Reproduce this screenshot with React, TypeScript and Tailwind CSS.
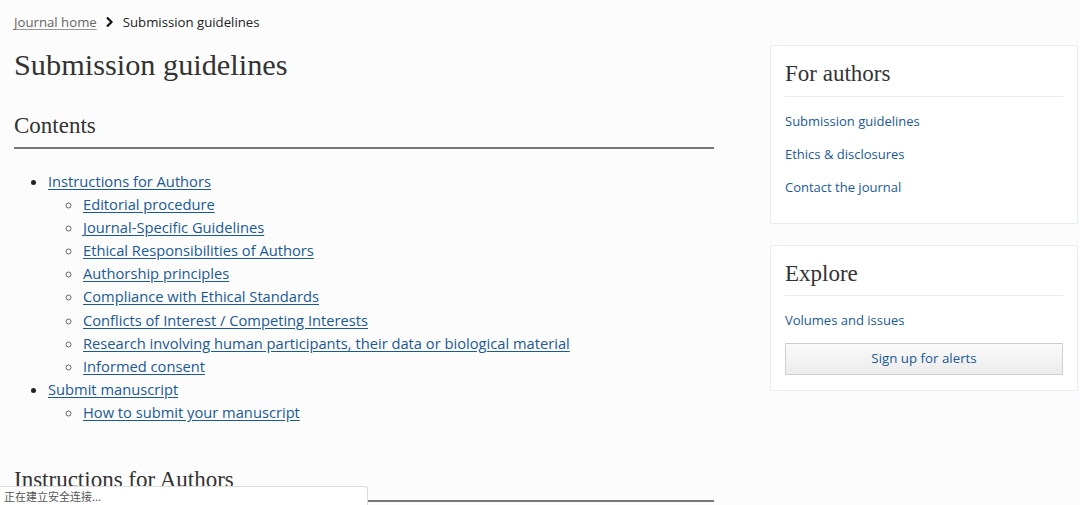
import React from "react";

const sans = "font-['Open_Sans','Noto_Sans',sans-serif]";
const serif = "font-['Liberation_Serif',serif]";

type Item = { label: string; children?: string[] };

const contents: Item[] = [
  {
    label: "Instructions for Authors",
    children: [
      "Editorial procedure",
      "Journal-Specific Guidelines",
      "Ethical Responsibilities of Authors",
      "Authorship principles",
      "Compliance with Ethical Standards",
      "Conflicts of Interest / Competing Interests",
      "Research involving human participants, their data or biological material",
      "Informed consent",
    ],
  },
  { label: "Submit manuscript", children: ["How to submit your manuscript"] },
];

function Chevron() {
  return (
    <svg width="9" height="12" viewBox="0 0 9 12" className="ml-[8px] mr-[9px]">
      <path d="M2 1.5 L6.5 6 L2 10.5" fill="none" stroke="#111" strokeWidth="2.2" />
    </svg>
  );
}

function SideLink({ children }: { children: React.ReactNode }) {
  return <a className="block text-[13px] leading-[20px] text-[#1a5a96] no-underline">{children}</a>;
}

export default function App() {
  return (
    <div className={`relative min-h-[505px] w-[1080px] overflow-hidden bg-[#fcfcfc] ${sans} text-[#222]`}>
      <div className="flex pl-[14px]">
        {/* main column */}
        <main className="w-[700px] shrink-0">
          <nav className="flex items-center pt-[13px] text-[13.2px] leading-[18px]">
            <a className="text-[#666] underline decoration-[#999] underline-offset-2">Journal home</a>
            <Chevron />
            <span className="text-[#222]">Submission guidelines</span>
          </nav>

          <h1 className={`${serif} mt-[16px] text-[30.3px] leading-[36px] font-normal text-[#333]`}>
            Submission guidelines
          </h1>

          <h2 className={`${serif} mt-[29px] border-b-2 border-[#777] pb-[7px] text-[23px] leading-[28px] font-normal text-[#333]`}>
            Contents
          </h2>

          <ul className="mt-[21px] list-disc pl-[34px] text-[14.7px] leading-[23.1px] marker:text-[#222]">
            {contents.map((item) => (
              <li key={item.label}>
                <a className="text-[#1a5a96] underline underline-offset-2">{item.label}</a>
                {item.children && (
                  <ul className="list-[circle] pl-[35px] marker:text-[#666]">
                    {item.children.map((c) => (
                      <li key={c}>
                        <a className="text-[#1a5a96] underline underline-offset-2">{c}</a>
                      </li>
                    ))}
                  </ul>
                )}
              </li>
            ))}
          </ul>

          <h2 className={`${serif} mt-[42px] border-b-2 border-[#777] pb-[6px] text-[23px] leading-[28px] font-normal text-[#333]`}>
            Instructions for Authors
          </h2>
        </main>

        {/* sidebar */}
        <aside className="ml-[56px] mt-[45px] flex w-[308px] shrink-0 flex-col gap-[21px]">
          <section className="border border-[#e6edf4] bg-white px-[14px] pt-[14px] pb-[26px]">
            <h3 className={`${serif} border-b border-[#e6edf4] pb-[8px] text-[23px] leading-[28px] font-normal text-[#333]`}>
              For authors
            </h3>
            <div className="mt-[14px] flex flex-col gap-[13px]">
              <SideLink>Submission guidelines</SideLink>
              <SideLink>Ethics &amp; disclosures</SideLink>
              <SideLink>Contact the journal</SideLink>
            </div>
          </section>

          <section className="border border-[#e6edf4] bg-white px-[14px] pt-[14px] pb-[15px]">
            <h3 className={`${serif} border-b border-[#e6edf4] pb-[7px] text-[23px] leading-[28px] font-normal text-[#333]`}>
              Explore
            </h3>
            <div className="mt-[14px]">
              <SideLink>Volumes and issues</SideLink>
            </div>
            <button className="mt-[13px] h-[32px] w-full border border-[#cfcfcf] bg-gradient-to-b from-[#fafafa] to-[#ececec] text-[13.3px] text-[#1a5a96]">
              Sign up for alerts
            </button>
          </section>
        </aside>
      </div>

      {/* browser status bubble */}
      <div className="absolute bottom-0 left-0 flex h-[19px] w-[368px] items-center rounded-tr-[3px] border-t border-r border-[#dcdcdc] bg-white pl-[4px] font-['Noto_Sans_CJK_SC',sans-serif] text-[11px] text-[#555]">
        正在建立安全连接...
      </div>
    </div>
  );
}
